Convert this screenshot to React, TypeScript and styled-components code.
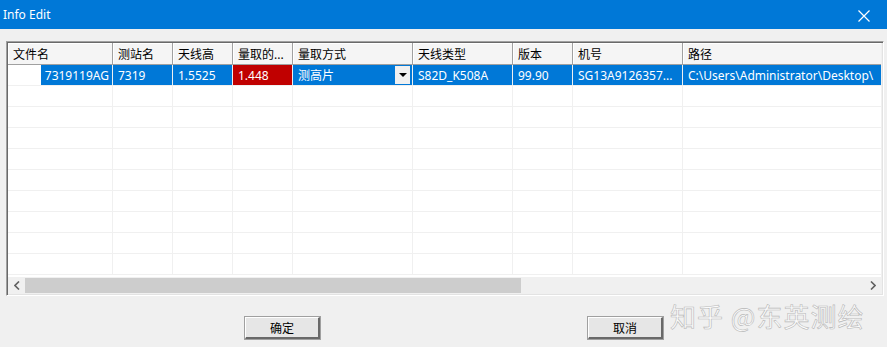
import styled, { createGlobalStyle } from 'styled-components';

const GlobalStyle = createGlobalStyle`
    html, body {
        margin: 0;
        padding: 0;
        background: #f0f0f0;
    }
    * {
        box-sizing: border-box;
    }
`

const FONT = `"Noto Sans", "Noto Sans CJK SC", sans-serif`

type Col = { title: string, width: number }

const columns: Col[] = [
    { title: "文件名", width: 105 },
    { title: "测站名", width: 60 },
    { title: "天线高", width: 60 },
    { title: "量取的...", width: 60 },
    { title: "量取方式", width: 120 },
    { title: "天线类型", width: 100 },
    { title: "版本", width: 60 },
    { title: "机号", width: 110 },
    { title: "路径", width: 300 },
]

const row = ["7319119AG", "7319", "1.5525", "1.448", "测高片", "S82D_K508A", "99.90", "SG13A9126357...", "C:\\Users\\Administrator\\Desktop\\"]

const App = () => {
    return <Window>
        <GlobalStyle />
        <TitleBar>
            <Title>Info Edit</Title>
            <Close>
                <svg width="12" height="12" viewBox="0 0 12 12">
                    <path d="M0.5 0.5 L11.5 11.5 M11.5 0.5 L0.5 11.5" stroke="#fff" strokeWidth="1.2" />
                </svg>
            </Close>
        </TitleBar>

        <Body>
            <Frame>
                <Table>
                    <HeadRow>
                        {columns.map((c) => (
                            <HeadCell key={c.title} w={c.width}>{c.title}</HeadCell>
                        ))}
                    </HeadRow>

                    <Row>
                        <Cell w={columns[0].width} bg="#fff" align="right">
                            <Picked>{row[0]}</Picked>
                        </Cell>
                        <Cell w={columns[1].width} bg="#0078d7">{row[1]}</Cell>
                        <Cell w={columns[2].width} bg="#0078d7">{row[2]}</Cell>
                        <Cell w={columns[3].width} bg="#c00000">{row[3]}</Cell>
                        <Cell w={columns[4].width} bg="#0078d7">
                            {row[4]}
                            <DropButton>
                                <svg width="8" height="4" viewBox="0 0 8 4">
                                    <path d="M0 0 L8 0 L4 4 Z" fill="#000" />
                                </svg>
                            </DropButton>
                        </Cell>
                        <Cell w={columns[5].width} bg="#0078d7">{row[5]}</Cell>
                        <Cell w={columns[6].width} bg="#0078d7">{row[6]}</Cell>
                        <Cell w={columns[7].width} bg="#0078d7">{row[7]}</Cell>
                        <Cell w={columns[8].width} bg="#0078d7">{row[8]}</Cell>
                    </Row>

                    {Array.from({ length: 9 }).map((_, i) => (
                        <Row key={i}>
                            {columns.map((c) => (
                                <Cell key={c.title} w={c.width} bg="#fff" />
                            ))}
                        </Row>
                    ))}
                </Table>

                <ScrollBar>
                    <Arrow>
                        <svg width="6" height="9" viewBox="0 0 6 9">
                            <path d="M5 0.5 L1 4.5 L5 8.5" stroke="#606060" strokeWidth="1.6" fill="none" />
                        </svg>
                    </Arrow>
                    <Track>
                        <Thumb />
                    </Track>
                    <Arrow>
                        <svg width="6" height="9" viewBox="0 0 6 9">
                            <path d="M1 0.5 L5 4.5 L1 8.5" stroke="#606060" strokeWidth="1.6" fill="none" />
                        </svg>
                    </Arrow>
                </ScrollBar>
            </Frame>

            <ButtonHolder>
                <Button>确定</Button>
                <Button>取消</Button>
            </ButtonHolder>

            <Watermark>知乎 @东英测绘</Watermark>
        </Body>
    </Window>;
}

export default App;

const Window = styled.div`
    width: 887px;
    height: 347px;
    background-color: #f0f0f0;
    display: flex;
    flex-direction: column;
    font-family: ${FONT};
    overflow: hidden;
`

const TitleBar = styled.div`
    height: 29px;
    background-color: #0078d7;
    display: flex;
    align-items: center;
    justify-content: space-between;
    padding: 0 17px 0 3px;
`

const Title = styled.div`
    color: white;
    font-size: 12px;
`

const Close = styled.div`
    display: flex;
    align-items: center;
    padding-top: 2px;
`

const Body = styled.div`
    flex: 1;
    position: relative;
    padding: 12px 3px 0 6px;
`

const Frame = styled.div`
    width: 878px;
    height: 255px;
    border-top: 1px solid #a0a0a0;
    border-left: 1px solid #a0a0a0;
    border-right: 1px solid #ffffff;
    border-bottom: 1px solid #ffffff;
    box-shadow: inset 1px 1px 0 #696969, inset -1px -1px 0 #e3e3e3;
    padding: 1px 2px 1px 1px;
    display: flex;
    flex-direction: column;
    overflow: hidden;
`

const Table = styled.div`
    flex: 1;
    background-color: white;
    overflow: hidden;
`

const HeadRow = styled.div`
    display: flex;
    height: 22px;
    background-color: #f5f5f5;
    border-bottom: 1px solid #a0a0a0;
`

const HeadCell = styled.div<{w: number}>`
    flex: 0 0 ${({w}) => w}px;
    width: ${({w}) => w}px;
    border-right: 1px solid #a0a0a0;
    box-shadow: inset 1px 1px 0 #ffffff;
    font-size: 12px;
    color: #000;
    padding-left: 5px;
    display: flex;
    align-items: center;
    white-space: nowrap;
    overflow: hidden;
`

const Row = styled.div`
    display: flex;
    height: 21px;
`

const Cell = styled.div<{w: number, bg: string, align?: string}>`
    flex: 0 0 ${({w}) => w}px;
    width: ${({w}) => w}px;
    position: relative;
    background-color: ${({bg}) => bg};
    color: white;
    border-right: 1px solid #f0f0f0;
    border-bottom: 1px solid #f0f0f0;
    font-size: 12px;
    padding-left: 5px;
    display: flex;
    align-items: center;
    justify-content: ${({align}) => align === "right" ? "flex-end" : "flex-start"};
    white-space: nowrap;
    overflow: hidden;
`

const Picked = styled.span`
    background-color: #0078d7;
    color: white;
    height: 100%;
    display: flex;
    align-items: center;
    padding: 0 3px 0 4px;
`

const DropButton = styled.div`
    position: absolute;
    right: 2px;
    top: 1px;
    width: 15px;
    height: 18px;
    background-color: #f0f0f0;
    display: flex;
    align-items: center;
    justify-content: center;
`

const ScrollBar = styled.div`
    height: 17px;
    display: flex;
    background-color: #f0f0f0;
`

const Arrow = styled.div`
    width: 17px;
    display: flex;
    align-items: center;
    justify-content: center;
`

const Track = styled.div`
    flex: 1;
    display: flex;
    padding: 1px 0;
`

const Thumb = styled.div`
    width: 496px;
    background-color: #cdcdcd;
`

const ButtonHolder = styled.div`
    display: flex;
    padding: 21px 0 0 239px;
    gap: 268px;
`

const Button = styled.div`
    width: 75px;
    height: 22px;
    background-color: #e6e6e6;
    border-top: 1px solid #ffffff;
    border-left: 1px solid #ffffff;
    border-right: 2px solid #696969;
    border-bottom: 2px solid #696969;
    box-shadow: 0 0 0 1px #a0a0a0;
    font-size: 12px;
    color: #000;
    display: flex;
    align-items: center;
    justify-content: center;
`

const Watermark = styled.div`
    position: absolute;
    left: 670px;
    top: 268px;
    font-size: 26px;
    letter-spacing: 1px;
    color: rgba(255, 255, 255, 0.8);
    -webkit-text-stroke: 0.6px #b8b8b8;
    white-space: nowrap;
    font-family: "Noto Sans CJK SC", sans-serif;
`
